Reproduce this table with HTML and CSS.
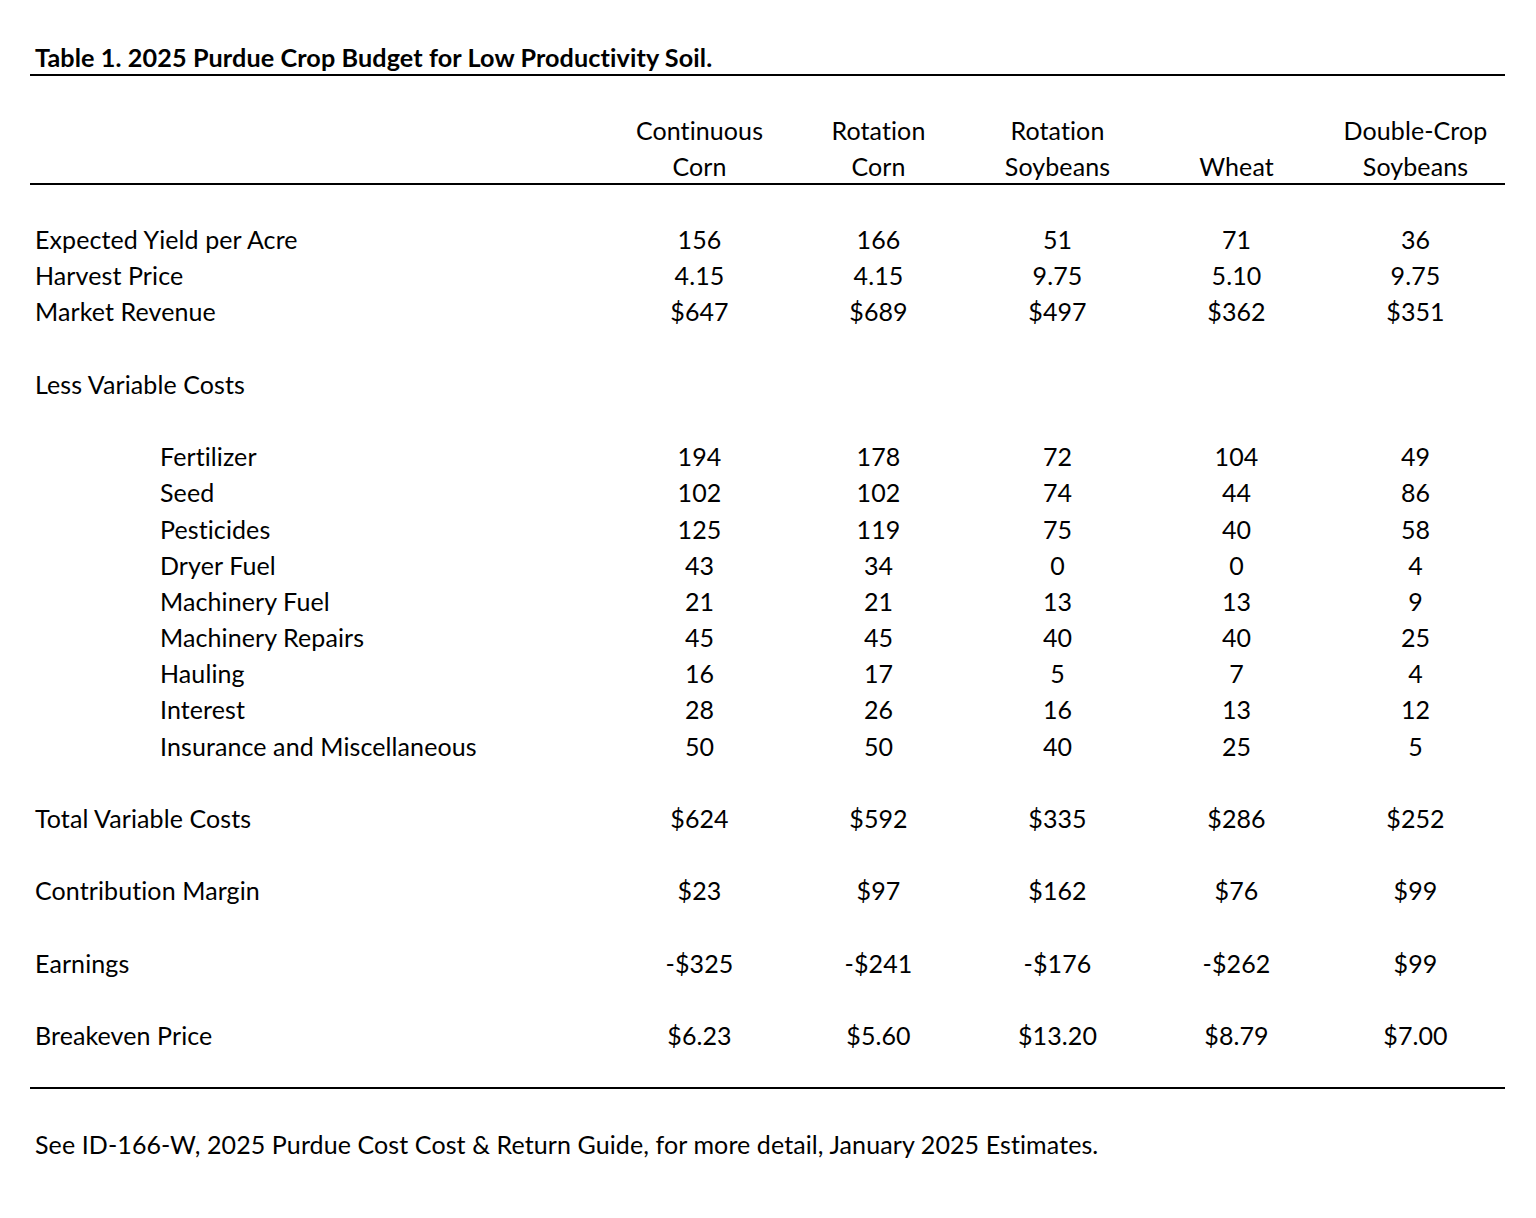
FILE: index.html
```html
<!DOCTYPE html>
<html lang="en">
<head>
<meta charset="utf-8">
<title>2025 Purdue Crop Budget for Low Productivity Soil</title>
<link rel="stylesheet" href="styles.css">
</head>
<body>
<div class="sheet">
  <div class="row title-row"><div class="title">Table 1. 2025 Purdue Crop Budget for Low Productivity Soil.</div></div>
  <div class="row blank"></div>
  <div class="row"><div class="lbl"></div><div class="num">Continuous</div><div class="num">Rotation</div><div class="num">Rotation</div><div class="num"></div><div class="num">Double-Crop</div></div>
  <div class="row rule"><div class="lbl"></div><div class="num">Corn</div><div class="num">Corn</div><div class="num">Soybeans</div><div class="num">Wheat</div><div class="num">Soybeans</div></div>
  <div class="row blank"></div>
  <div class="row"><div class="lbl">Expected Yield per Acre</div><div class="num">156</div><div class="num">166</div><div class="num">51</div><div class="num">71</div><div class="num">36</div></div>
  <div class="row"><div class="lbl">Harvest Price</div><div class="num">4.15</div><div class="num">4.15</div><div class="num">9.75</div><div class="num">5.10</div><div class="num">9.75</div></div>
  <div class="row"><div class="lbl">Market Revenue</div><div class="num">$647</div><div class="num">$689</div><div class="num">$497</div><div class="num">$362</div><div class="num">$351</div></div>
  <div class="row blank"></div>
  <div class="row"><div class="lbl">Less Variable Costs</div></div>
  <div class="row blank"></div>
  <div class="row"><div class="lbl sub">Fertilizer</div><div class="num">194</div><div class="num">178</div><div class="num">72</div><div class="num">104</div><div class="num">49</div></div>
  <div class="row"><div class="lbl sub">Seed</div><div class="num">102</div><div class="num">102</div><div class="num">74</div><div class="num">44</div><div class="num">86</div></div>
  <div class="row"><div class="lbl sub">Pesticides</div><div class="num">125</div><div class="num">119</div><div class="num">75</div><div class="num">40</div><div class="num">58</div></div>
  <div class="row"><div class="lbl sub">Dryer Fuel</div><div class="num">43</div><div class="num">34</div><div class="num">0</div><div class="num">0</div><div class="num">4</div></div>
  <div class="row"><div class="lbl sub">Machinery Fuel</div><div class="num">21</div><div class="num">21</div><div class="num">13</div><div class="num">13</div><div class="num">9</div></div>
  <div class="row"><div class="lbl sub">Machinery Repairs</div><div class="num">45</div><div class="num">45</div><div class="num">40</div><div class="num">40</div><div class="num">25</div></div>
  <div class="row"><div class="lbl sub">Hauling</div><div class="num">16</div><div class="num">17</div><div class="num">5</div><div class="num">7</div><div class="num">4</div></div>
  <div class="row"><div class="lbl sub">Interest</div><div class="num">28</div><div class="num">26</div><div class="num">16</div><div class="num">13</div><div class="num">12</div></div>
  <div class="row"><div class="lbl sub">Insurance and Miscellaneous</div><div class="num">50</div><div class="num">50</div><div class="num">40</div><div class="num">25</div><div class="num">5</div></div>
  <div class="row blank"></div>
  <div class="row"><div class="lbl">Total Variable Costs</div><div class="num">$624</div><div class="num">$592</div><div class="num">$335</div><div class="num">$286</div><div class="num">$252</div></div>
  <div class="row blank"></div>
  <div class="row"><div class="lbl">Contribution Margin</div><div class="num">$23</div><div class="num">$97</div><div class="num">$162</div><div class="num">$76</div><div class="num">$99</div></div>
  <div class="row blank"></div>
  <div class="row"><div class="lbl">Earnings</div><div class="num">-$325</div><div class="num">-$241</div><div class="num">-$176</div><div class="num">-$262</div><div class="num">$99</div></div>
  <div class="row blank"></div>
  <div class="row"><div class="lbl">Breakeven Price</div><div class="num">$6.23</div><div class="num">$5.60</div><div class="num">$13.20</div><div class="num">$8.79</div><div class="num">$7.00</div></div>
  <div class="row blank rule"></div>
  <div class="row blank"></div>
  <div class="row note-row"><div class="note">See ID-166-W, 2025 Purdue Cost Cost &amp; Return Guide, for more detail, January 2025 Estimates.</div></div>
</div>
</body>
</html>
```
FILE: styles.css
```css
html, body {
  margin: 0;
  padding: 0;
  background: #ffffff;
}
body {
  font-family: Lato, "Open Sans", "Liberation Sans", sans-serif;
  font-size: 25px;
  letter-spacing: 0.1px;
  font-variant-ligatures: none;
  color: #000000;
}
.sheet {
  width: 1475px;
  margin: 40px 0 0 30px;
}
.row {
  display: grid;
  grid-template-columns: 580px repeat(5, 179px);
  align-items: center;
  height: 36.2px;
  box-sizing: border-box;
  white-space: nowrap;
}
.rule {
  border-bottom: 2px solid #000000;
}
.title-row {
  display: flex;
  border-bottom: 2px solid #000000;
}
.title {
  padding-left: 5px;
  font-weight: 700;
  font-size: 25.2px;
}
.lbl {
  padding-left: 5px;
}
.lbl.sub {
  padding-left: 130px;
}
.num {
  text-align: center;
}
.note-row {
  display: flex;
}
.note {
  padding-left: 5px;
}
```
